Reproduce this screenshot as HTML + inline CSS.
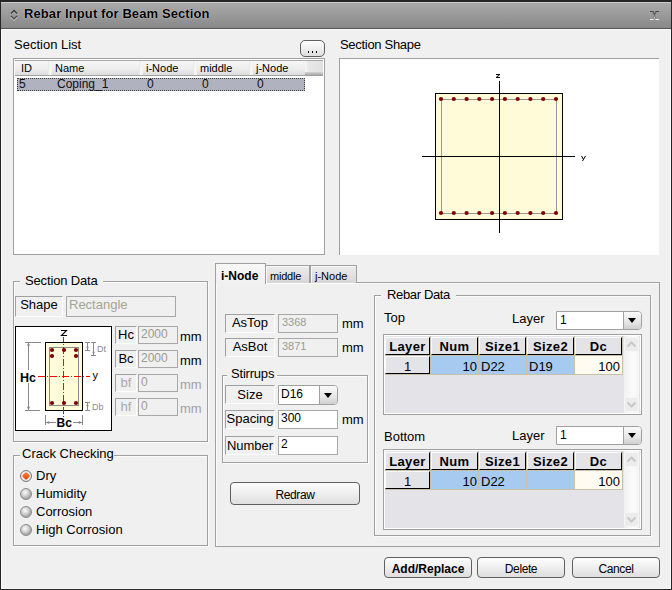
<!DOCTYPE html>
<html><head><meta charset="utf-8">
<style>
*{box-sizing:border-box;margin:0;padding:0}
html,body{width:672px;height:590px;overflow:hidden;background:#f0f0f0}
body{position:relative;font-family:"Liberation Sans",sans-serif;font-size:12px;color:#000}
.a{position:absolute}
.t{position:absolute;white-space:nowrap;line-height:1}
#frame{left:0;top:29px;width:672px;height:561px;border-left:1px solid #262626;border-right:1px solid #262626;border-bottom:1px solid #262626;box-shadow:inset 1px 0 0 #fafafa,inset -1px -1px 0 #fafafa}
#title{left:0;top:0;width:672px;height:30px;background:linear-gradient(#262626 0,#262626 2px,#cacaca 2px,#cacaca 3px,#aaaaaa 3px,#9a9a9a 15px,#888888 28px,#555 28px,#555 29px,#fafafa 29px);border-left:1px solid #262626;border-right:1px solid #262626}
.grp{position:absolute;border:1px solid #a0a0a0;box-shadow:1px 1px 0 #fcfcfc,inset 1px 1px 0 #fcfcfc}
.gt{position:absolute;background:#f0f0f0;padding:0 3px;line-height:1;white-space:nowrap;font-size:13px}
.lbl{position:absolute;border-left:1px solid #a0a0a0;border-top:1px solid #a0a0a0;border-right:1px solid #fff;border-bottom:1px solid #fff;text-align:center;line-height:1;white-space:nowrap}
.inp{position:absolute;border:1px solid #a8a8a8;background:#f0f0f0;color:#9c9c8c;padding-left:2px;white-space:nowrap;line-height:1}
.inpw{background:#fff;color:#000}
.btn{position:absolute;border:1px solid #606060;border-radius:4px;background:linear-gradient(#fdfdfd,#f0f0f0 45%,#dedede);text-align:center;white-space:nowrap}
</style></head><body>
<div id="title" class="a"></div>
<div id="frame" class="a"></div>
<div class="t" style="left:24px;top:7px;font-weight:bold;font-size:13px;letter-spacing:0.1px;text-shadow:0 0 1px #d8d8d8,0 0 1px #d8d8d8">Rebar Input for Beam Section</div>
<svg class="a" style="left:0;top:0" width="30" height="29" viewBox="0 0 30 29">
<path d="M11 13.5 L14 10.5 L17 13.5" fill="none" stroke="#d0d0d0" stroke-width="1" transform="translate(0,1)"/>
<path d="M11 13.5 L14 10.5 L17 13.5" fill="none" stroke="#3a3a3a" stroke-width="1.4"/>
<path d="M11 16 L14 19 L17 16" fill="none" stroke="#e8e8e8" stroke-width="1.2" transform="translate(0,1)"/>
<path d="M11 16 L14 19 L17 16" fill="none" stroke="#4a4a4a" stroke-width="1.4"/>
</svg>
<svg class="a" style="left:640px;top:0" width="30" height="29" viewBox="640 0 30 29">
<path d="M650 11.5 H653 L654.5 14.5 L656 11.5 H659" fill="none" stroke="#4a4a4a" stroke-width="1.2"/>
<path d="M650 19.5 H653 L654.5 16.5 L656 19.5 H659" fill="none" stroke="#f0f0f0" stroke-width="1.2"/>
<path d="M653 12 L656 19 M656 12 L653 19" fill="none" stroke="#707070" stroke-width="1"/>
</svg>

<!-- Section List -->
<div class="t" style="left:14px;top:38px;font-size:13px">Section List</div>
<div class="btn" style="left:300px;top:40px;width:25px;height:17px;border-radius:5px"></div><div class="a" style="left:307.5px;top:51px;width:1px;height:2px;background:#000"></div><div class="a" style="left:311.5px;top:51px;width:1px;height:2px;background:#000"></div><div class="a" style="left:315.5px;top:51px;width:1px;height:2px;background:#000"></div>
<div class="a" style="left:13px;top:58px;width:312px;height:197px;border:1px solid #a0a0a0;background:#fff"></div>
<div class="a" style="left:15px;top:60px;width:308px;height:1px;background:#a8a8a8"></div>
<div class="a" style="left:15px;top:61px;width:308px;height:14px;background:linear-gradient(#f8f8f8,#ececec 60%,#dcdcdc)"></div>
<div class="a" style="left:15px;top:75px;width:308px;height:1px;background:#a0a0a0"></div>
<div class="a" style="left:48px;top:61px;width:4px;height:14px;background:linear-gradient(90deg,#e4e4e4,#f8f8f8,#f0f0f0)"></div>
<div class="a" style="left:139px;top:61px;width:4px;height:14px;background:linear-gradient(90deg,#e4e4e4,#f8f8f8,#f0f0f0)"></div>
<div class="a" style="left:193px;top:61px;width:4px;height:14px;background:linear-gradient(90deg,#e4e4e4,#f8f8f8,#f0f0f0)"></div>
<div class="a" style="left:249px;top:61px;width:4px;height:14px;background:linear-gradient(90deg,#e4e4e4,#f8f8f8,#f0f0f0)"></div>
<div class="a" style="left:305px;top:61px;width:18px;height:14px;background:linear-gradient(90deg,#f8f8f8,#e8e8e8 20%,#e0e0e0)"></div><div class="a" style="left:305px;top:72px;width:18px;height:3px;background:linear-gradient(#d4d4d4,#a8a8a8)"></div>
<div class="t" style="left:21px;top:63px;font-size:11px">ID</div>
<div class="t" style="left:55px;top:63px;font-size:11px">Name</div>
<div class="t" style="left:146px;top:63px;font-size:11px">i-Node</div>
<div class="t" style="left:200px;top:63px;font-size:11px">middle</div>
<div class="t" style="left:256px;top:63px;font-size:11px">j-Node</div>
<div class="a" style="left:17px;top:78px;width:288px;height:13px;background:#b0b2c0;border:1px dotted #404040"></div>
<div class="t" style="left:19px;top:78px;color:#101010">5</div>
<div class="t" style="left:57px;top:78px;color:#101010">Coping_1</div>
<div class="t" style="left:147px;top:78px;color:#101010">0</div>
<div class="t" style="left:202px;top:78px;color:#101010">0</div>
<div class="t" style="left:257px;top:78px;color:#101010">0</div>

<!-- Section Shape -->
<div class="t" style="left:340px;top:38px;font-size:13px;letter-spacing:-0.3px">Section Shape</div>
<div class="a" style="left:339px;top:58px;width:320px;height:197px;border-left:1px solid #a0a0a0;border-top:1px solid #a0a0a0;background:#fff"></div>
<svg class="a" style="left:340px;top:59px" width="319" height="196" viewBox="340 59 319 196">
<rect x="435.5" y="93.5" width="127" height="126" fill="#fffad8" stroke="#000" stroke-width="1"/>
<rect x="441.5" y="99.5" width="115" height="114" fill="none" stroke="#989898" stroke-width="1"/>
<line x1="422" y1="156.5" x2="575" y2="156.5" stroke="#000"/>
<line x1="499.5" y1="81" x2="499.5" y2="233" stroke="#000"/>
<g fill="#800000">
<circle cx="441.0" cy="99.0" r="2.1"/><circle cx="453.8" cy="99.0" r="2.1"/><circle cx="466.6" cy="99.0" r="2.1"/><circle cx="479.3" cy="99.0" r="2.1"/><circle cx="492.1" cy="99.0" r="2.1"/><circle cx="504.9" cy="99.0" r="2.1"/><circle cx="517.7" cy="99.0" r="2.1"/><circle cx="530.4" cy="99.0" r="2.1"/><circle cx="543.2" cy="99.0" r="2.1"/><circle cx="556.0" cy="99.0" r="2.1"/>
<circle cx="441.0" cy="213.0" r="2.1"/><circle cx="453.8" cy="213.0" r="2.1"/><circle cx="466.6" cy="213.0" r="2.1"/><circle cx="479.3" cy="213.0" r="2.1"/><circle cx="492.1" cy="213.0" r="2.1"/><circle cx="504.9" cy="213.0" r="2.1"/><circle cx="517.7" cy="213.0" r="2.1"/><circle cx="530.4" cy="213.0" r="2.1"/><circle cx="543.2" cy="213.0" r="2.1"/><circle cx="556.0" cy="213.0" r="2.1"/>
</g>
<path d="M496 74.5 H500 M499.5 75 L496.5 77 M496 77.5 H500" stroke="#000" stroke-width="1" fill="none"/>
<path d="M581.5 156 L583.5 159.5 M585.5 156 L582.5 161" stroke="#000" stroke-width="1" fill="none"/>
</svg>

<!-- Section Data -->
<div class="grp" style="left:13px;top:281px;width:195px;height:161px"></div>
<div class="a" style="left:20px;top:279px;width:83px;height:5px;background:#f0f0f0"></div><div class="t" style="left:25px;top:274px;font-size:13px;letter-spacing:-0.15px">Section Data</div>
<div class="lbl" style="left:15px;top:296px;width:48px;height:21px;font-size:13px;padding-top:1px">Shape</div>
<div class="inp" style="left:66px;top:296px;width:110px;height:21px;font-size:13px;padding-top:1px;padding-left:2px;color:#a4a494">Rectangle</div>
<div class="a" style="left:15px;top:326px;width:97px;height:105px;border:1px solid #000;background:#fff"></div>
<svg class="a" style="left:16px;top:327px" width="95" height="103" viewBox="16 327 95 103">
<rect x="45.5" y="342.5" width="37" height="68" fill="#fffad8" stroke="#000"/>
<rect x="49.5" y="347.5" width="29" height="58" fill="none" stroke="#8c8c8c"/>
<g stroke="#ff0000" stroke-width="1">
<path d="M63.5 337 V342 M63.5 344 V345 M63.5 347 V354 M63.5 356 V357 M63.5 359 V366 M63.5 368 V369 M63.5 371 V378 M63.5 380 V381 M63.5 383 V390 M63.5 392 V393 M63.5 395 V402 M63.5 404 V405 M63.5 407 V414 M63.5 416 V417"/>
<path d="M38 376.5 H45 M47 376.5 H48 M50 376.5 H57 M59 376.5 H60 M62 376.5 H69 M71 376.5 H72 M74 376.5 H81 M83 376.5 H84 M86 376.5 H90"/>
</g>
<g fill="#800000">
<circle cx="52" cy="350" r="2.1"/><circle cx="64" cy="350" r="2.1"/><circle cx="76" cy="350" r="2.1"/>
<circle cx="52" cy="356" r="2.1"/><circle cx="76" cy="356" r="2.1"/>
<circle cx="52" cy="403" r="2.1"/><circle cx="64" cy="403" r="2.1"/><circle cx="76" cy="403" r="2.1"/>
</g>
<g stroke="#8a8a8a" stroke-width="1" fill="none">
<path d="M25 342.5 H41 M25 410.5 H40 M28.5 343 V370 M28.5 383 V410"/>
<path d="M45.5 415 V425 M46 422.5 H56 M82.5 415 V425 M73 422.5 H82"/>
<path d="M85 342.5 H90 M87.5 343 V350 M85 350.5 H90 M91 342.5 H96 M93.5 343 V355 M91 355.5 H96"/>
<path d="M85 402.5 H90 M87.5 403 V410 M85 410.5 H90"/>
</g>
<g fill="#8a8a8a"><circle cx="28.5" cy="345" r="1.2"/><circle cx="28.5" cy="407.5" r="1.2"/><circle cx="48.5" cy="422.5" r="1.2"/><circle cx="79.5" cy="422.5" r="1.2"/>
<circle cx="87.5" cy="347.5" r="1.1"/><circle cx="93.5" cy="352.5" r="1.1"/><circle cx="87.5" cy="405.5" r="1.1"/></g>
<path d="M61 330.5 H66.5 L61.5 335.5 H67" stroke="#000" stroke-width="1.1" fill="none"/>
<text x="92.5" y="379" font-family="Liberation Sans" font-size="11" fill="#000">y</text>
<text x="20" y="381.5" font-family="Liberation Sans" font-weight="bold" font-size="12.5" fill="#000">Hc</text>
<text x="56.5" y="427" font-family="Liberation Sans" font-weight="bold" font-size="12" fill="#000">Bc</text>
<text x="97" y="352" font-family="Liberation Sans" font-size="9" fill="#8a8a8a">Dt</text>
<text x="92" y="410" font-family="Liberation Sans" font-size="9" fill="#8a8a8a">Db</text>
</svg>
<div class="lbl" style="left:115px;top:326px;width:22px;height:18px;font-size:13px;padding-top:1px">Hc</div>
<div class="inp" style="left:138px;top:326px;width:40px;height:18px;font-size:12px;padding-top:1px">2000</div>
<div class="t" style="left:180px;top:330px;font-size:13px">mm</div>
<div class="lbl" style="left:115px;top:350px;width:22px;height:18px;font-size:13px;padding-top:1px">Bc</div>
<div class="inp" style="left:138px;top:350px;width:40px;height:18px;font-size:12px;padding-top:1px">2000</div>
<div class="t" style="left:180px;top:354px;font-size:13px">mm</div>
<div class="lbl" style="left:115px;top:374px;width:22px;height:18px;font-size:13px;padding-top:1px;color:#a8a8a8">bf</div>
<div class="inp" style="left:138px;top:374px;width:40px;height:18px;font-size:12px;padding-top:1px">0</div>
<div class="t" style="left:180px;top:378px;font-size:13px;color:#a0a0a0">mm</div>
<div class="lbl" style="left:115px;top:398px;width:22px;height:18px;font-size:13px;padding-top:1px;color:#a8a8a8">hf</div>
<div class="inp" style="left:138px;top:398px;width:40px;height:18px;font-size:12px;padding-top:1px">0</div>
<div class="t" style="left:180px;top:402px;font-size:13px;color:#a0a0a0">mm</div>

<!-- Crack Checking -->
<div class="grp" style="left:13px;top:455px;width:195px;height:91px"></div>
<div class="a" style="left:20px;top:452px;width:94px;height:5px;background:#f0f0f0"></div><div class="t" style="left:22px;top:447px;font-size:13px">Crack Checking</div>
<div class="a" style="left:20px;top:470px;width:12px;height:12px;border-radius:50%;border:1px solid #8a8a8a;background:radial-gradient(circle at 50% 50%,#f4f4f4 0,#eef2f2 4px,#d8d8d8 5px);border-color:#7a7a7a"></div>
<div class="a" style="left:23.2px;top:473px;width:6.2px;height:6.2px;transform:rotate(45deg);border-radius:1.2px;background:linear-gradient(135deg,#ff9050,#f05818 60%,#e04010)"></div>
<div class="a" style="left:20px;top:488px;width:12px;height:12px;border-radius:50%;border:1px solid #8a8a8a;background:radial-gradient(circle at 40% 35%,#fafafa 0,#d8d8d8 3px,#a8a8a8 6px)"></div>
<div class="a" style="left:20px;top:506px;width:12px;height:12px;border-radius:50%;border:1px solid #8a8a8a;background:radial-gradient(circle at 40% 35%,#fafafa 0,#d8d8d8 3px,#a8a8a8 6px)"></div>
<div class="a" style="left:20px;top:524px;width:12px;height:12px;border-radius:50%;border:1px solid #8a8a8a;background:radial-gradient(circle at 40% 35%,#fafafa 0,#d8d8d8 3px,#a8a8a8 6px)"></div>
<div class="t" style="left:36px;top:469px;font-size:13px">Dry</div>
<div class="t" style="left:36px;top:487px;font-size:13px">Humidity</div>
<div class="t" style="left:36px;top:505px;font-size:13px">Corrosion</div>
<div class="t" style="left:36px;top:523px;font-size:13px">High Corrosion</div>

<!-- Tab panel -->
<div class="a" style="left:215px;top:282px;width:445px;height:265px;border:1px solid #a0a0a0;box-shadow:inset 1px 1px 0 #fcfcfc"></div>
<!-- tabs -->
<div class="a" style="left:265px;top:265px;width:45px;height:18px;border:1px solid #a0a0a0;border-bottom:none;background:linear-gradient(#ececec,#e2e2e2 50%,#d6d6d6);box-shadow:inset 1px 1px 0 #f8f8f8"></div>
<div class="a" style="left:310px;top:265px;width:47px;height:18px;border:1px solid #a0a0a0;border-bottom:none;background:linear-gradient(#ececec,#e2e2e2 50%,#d6d6d6);box-shadow:inset 1px 1px 0 #f8f8f8"></div>
<div class="a" style="left:215px;top:263px;width:51px;height:21px;border:1px solid #a0a0a0;border-bottom:none;background:linear-gradient(#f8f8f8,#f0f0f0)"></div>
<div class="t" style="left:221px;top:270px;font-weight:bold;font-size:12px">i-Node</div>
<div class="t" style="left:270px;top:271px;font-size:11px;letter-spacing:-0.2px">middle</div>
<div class="t" style="left:315px;top:271px;font-size:11px">j-Node</div>

<div class="lbl" style="left:225px;top:314px;width:50px;height:19px;font-size:13px;padding-top:1px">AsTop</div>
<div class="inp" style="left:278px;top:314px;width:60px;height:19px;font-size:11px;padding-top:2px;padding-left:3px">3368</div>
<div class="t" style="left:342px;top:317px;font-size:13px">mm</div>
<div class="lbl" style="left:225px;top:338px;width:50px;height:19px;font-size:13px;padding-top:1px">AsBot</div>
<div class="inp" style="left:278px;top:338px;width:60px;height:19px;font-size:11px;padding-top:2px;padding-left:3px">3871</div>
<div class="t" style="left:342px;top:341px;font-size:13px">mm</div>

<div class="grp" style="left:222px;top:375px;width:146px;height:88px"></div>
<div class="a" style="left:227px;top:372px;width:50px;height:5px;background:#f0f0f0"></div><div class="t" style="left:231px;top:367px;font-size:13px;letter-spacing:-0.2px">Stirrups</div>
<div class="lbl" style="left:225px;top:385px;width:50px;height:19px;font-size:13px;padding-top:2px">Size</div>
<div class="a" style="left:278px;top:385px;width:60px;height:20px;border:1px solid #a0a0a0;border-radius:0 4px 4px 0;background:#fff"></div>
<div class="t" style="left:281px;top:388px;font-size:12px">D16</div>
<div class="a" style="left:319px;top:386px;width:18px;height:18px;border-left:1px solid #a0a0a0;border-radius:0 3px 3px 0;background:linear-gradient(#fafafa,#e6e6e6 60%,#cfcfcf)"></div>
<div class="a" style="left:323.5px;top:392.5px;width:0;height:0;border-left:4px solid transparent;border-right:4px solid transparent;border-top:5.5px solid #000"></div>
<div class="lbl" style="left:225px;top:410px;width:50px;height:19px;font-size:13px;padding-top:1px">Spacing</div>
<div class="inp inpw" style="left:278px;top:410px;width:60px;height:19px;font-size:12px;padding-top:1px">300</div>
<div class="t" style="left:342px;top:413px;font-size:13px">mm</div>
<div class="lbl" style="left:225px;top:436px;width:50px;height:19px;font-size:13px;padding-top:2px">Number</div>
<div class="inp inpw" style="left:278px;top:436px;width:60px;height:19px;font-size:12px;padding-top:1px">2</div>

<div class="btn" style="left:230px;top:482px;width:130px;height:23px;line-height:25px;font-size:12px;letter-spacing:-0.4px">Redraw</div>

<!-- Rebar Data -->
<div class="grp" style="left:374px;top:295px;width:277px;height:241px"></div>
<div class="a" style="left:381px;top:293px;width:75px;height:5px;background:#f0f0f0"></div><div class="t" style="left:387px;top:288px;font-size:13px;letter-spacing:-0.35px">Rebar Data</div>
<div class="t" style="left:384px;top:311px;font-size:13px">Top</div>
<div class="t" style="left:512px;top:312px;font-size:13px">Layer</div>
<div class="a" style="left:556px;top:311px;width:86px;height:19px;border:1px solid #a0a0a0;border-radius:0 4px 4px 0;background:#fff"></div>
<div class="t" style="left:560px;top:314px;font-size:12px">1</div>
<div class="a" style="left:623px;top:312px;width:18px;height:17px;border-left:1px solid #a0a0a0;border-radius:0 3px 3px 0;background:linear-gradient(#fafafa,#e6e6e6 60%,#cfcfcf)"></div>
<div class="a" style="left:627.5px;top:317.5px;width:0;height:0;border-left:4px solid transparent;border-right:4px solid transparent;border-top:5.5px solid #000"></div>

<div class="t" style="left:384px;top:430px;font-size:13px">Bottom</div>
<div class="t" style="left:512px;top:429px;font-size:13px">Layer</div>
<div class="a" style="left:556px;top:426px;width:86px;height:19px;border:1px solid #a0a0a0;border-radius:0 4px 4px 0;background:#fff"></div>
<div class="t" style="left:560px;top:429px;font-size:12px">1</div>
<div class="a" style="left:623px;top:427px;width:18px;height:17px;border-left:1px solid #a0a0a0;border-radius:0 3px 3px 0;background:linear-gradient(#fafafa,#e6e6e6 60%,#cfcfcf)"></div>
<div class="a" style="left:627.5px;top:432.5px;width:0;height:0;border-left:4px solid transparent;border-right:4px solid transparent;border-top:5.5px solid #000"></div>

<!-- GRIDS -->
<div class="a" style="left:383px;top:334px;width:259px;height:81px;border:1px solid #a0a0a0;background:#e3e3e8;box-shadow:inset 1px 1px 0 #fff,inset -1px -1px 0 #fff"></div>
<div class="a" style="left:385px;top:355px;width:238px;height:1px;background:#c8c0a8"></div>
<div class="a" style="left:385px;top:374px;width:238px;height:1px;background:#c8c0a8"></div>
<div class="a" style="left:430px;top:336px;width:1px;height:39px;background:#c8c0a8"></div>
<div class="a" style="left:385px;top:337px;width:45px;height:18px;background:#e3e3e8;border-top:1px solid #fafafa;border-left:1px solid #fafafa;border-right:1px solid #000;border-bottom:1px solid #000"></div>
<div class="t" style="left:385px;top:340px;width:45px;text-align:center;font-weight:bold;font-size:13px;letter-spacing:0.4px">Layer</div>
<div class="a" style="left:478px;top:336px;width:1px;height:39px;background:#c8c0a8"></div>
<div class="a" style="left:431px;top:337px;width:47px;height:18px;background:#e3e3e8;border-top:1px solid #fafafa;border-left:1px solid #fafafa;border-right:1px solid #000;border-bottom:1px solid #000"></div>
<div class="t" style="left:431px;top:340px;width:47px;text-align:center;font-weight:bold;font-size:13px;letter-spacing:0.4px">Num</div>
<div class="a" style="left:526px;top:336px;width:1px;height:39px;background:#c8c0a8"></div>
<div class="a" style="left:479px;top:337px;width:47px;height:18px;background:#e3e3e8;border-top:1px solid #fafafa;border-left:1px solid #fafafa;border-right:1px solid #000;border-bottom:1px solid #000"></div>
<div class="t" style="left:479px;top:340px;width:47px;text-align:center;font-weight:bold;font-size:13px;letter-spacing:0.4px">Size1</div>
<div class="a" style="left:574px;top:336px;width:1px;height:39px;background:#c8c0a8"></div>
<div class="a" style="left:527px;top:337px;width:47px;height:18px;background:#e3e3e8;border-top:1px solid #fafafa;border-left:1px solid #fafafa;border-right:1px solid #000;border-bottom:1px solid #000"></div>
<div class="t" style="left:527px;top:340px;width:47px;text-align:center;font-weight:bold;font-size:13px;letter-spacing:0.4px">Size2</div>
<div class="a" style="left:622px;top:336px;width:1px;height:39px;background:#c8c0a8"></div>
<div class="a" style="left:575px;top:337px;width:47px;height:18px;background:#e3e3e8;border-top:1px solid #fafafa;border-left:1px solid #fafafa;border-right:1px solid #000;border-bottom:1px solid #000"></div>
<div class="t" style="left:575px;top:340px;width:47px;text-align:center;font-weight:bold;font-size:13px;letter-spacing:0.4px">Dc</div>
<div class="a" style="left:385px;top:356px;width:45px;height:18px;background:#e3e3e8;border-top:1px solid #fafafa;border-left:1px solid #fafafa;border-right:1px solid #000;border-bottom:1px solid #000"></div>
<div class="t" style="left:385px;top:360px;width:45px;text-align:center;font-size:13px">1</div>
<div class="a" style="left:431px;top:356px;width:47px;height:18px;background:#a6caf0"></div>
<div class="t" style="left:431px;top:360px;width:46px;text-align:right;font-size:13px">10</div>
<div class="a" style="left:479px;top:356px;width:47px;height:18px;background:#a6caf0"></div>
<div class="t" style="left:481px;top:360px;font-size:13px">D22</div>
<div class="a" style="left:527px;top:356px;width:47px;height:18px;background:#a6caf0"></div>
<div class="t" style="left:529px;top:360px;font-size:13px">D19</div>
<div class="a" style="left:575px;top:356px;width:47px;height:18px;background:#fffbf0"></div>
<div class="t" style="left:575px;top:360px;width:45px;text-align:right;font-size:13px">100</div>
<div class="a" style="left:624px;top:336px;width:15px;height:77px;background:linear-gradient(90deg,#f0f0f0,#fbfbfb 60%,#f4f4f4)"></div>
<div class="a" style="left:624px;top:337px;width:15px;height:15px;background:#ececec;border:1px solid #f6f6f6;border-radius:2px"></div>
<svg class="a" style="left:624px;top:337px" width="15" height="15"><path d="M3.5 9.5 L7.5 5.5 L11.5 9.5" fill="none" stroke="#c8c8c8" stroke-width="2"/></svg>
<div class="a" style="left:624px;top:397px;width:15px;height:15px;background:#ececec;border:1px solid #f6f6f6;border-radius:2px"></div>
<svg class="a" style="left:624px;top:397px" width="15" height="15"><path d="M3.5 5.5 L7.5 9.5 L11.5 5.5" fill="none" stroke="#c8c8c8" stroke-width="2"/></svg>
<div class="a" style="left:383px;top:449px;width:259px;height:81px;border:1px solid #a0a0a0;background:#e3e3e8;box-shadow:inset 1px 1px 0 #fff,inset -1px -1px 0 #fff"></div>
<div class="a" style="left:385px;top:470px;width:238px;height:1px;background:#c8c0a8"></div>
<div class="a" style="left:385px;top:489px;width:238px;height:1px;background:#c8c0a8"></div>
<div class="a" style="left:430px;top:451px;width:1px;height:39px;background:#c8c0a8"></div>
<div class="a" style="left:385px;top:452px;width:45px;height:18px;background:#e3e3e8;border-top:1px solid #fafafa;border-left:1px solid #fafafa;border-right:1px solid #000;border-bottom:1px solid #000"></div>
<div class="t" style="left:385px;top:455px;width:45px;text-align:center;font-weight:bold;font-size:13px;letter-spacing:0.4px">Layer</div>
<div class="a" style="left:478px;top:451px;width:1px;height:39px;background:#c8c0a8"></div>
<div class="a" style="left:431px;top:452px;width:47px;height:18px;background:#e3e3e8;border-top:1px solid #fafafa;border-left:1px solid #fafafa;border-right:1px solid #000;border-bottom:1px solid #000"></div>
<div class="t" style="left:431px;top:455px;width:47px;text-align:center;font-weight:bold;font-size:13px;letter-spacing:0.4px">Num</div>
<div class="a" style="left:526px;top:451px;width:1px;height:39px;background:#c8c0a8"></div>
<div class="a" style="left:479px;top:452px;width:47px;height:18px;background:#e3e3e8;border-top:1px solid #fafafa;border-left:1px solid #fafafa;border-right:1px solid #000;border-bottom:1px solid #000"></div>
<div class="t" style="left:479px;top:455px;width:47px;text-align:center;font-weight:bold;font-size:13px;letter-spacing:0.4px">Size1</div>
<div class="a" style="left:574px;top:451px;width:1px;height:39px;background:#c8c0a8"></div>
<div class="a" style="left:527px;top:452px;width:47px;height:18px;background:#e3e3e8;border-top:1px solid #fafafa;border-left:1px solid #fafafa;border-right:1px solid #000;border-bottom:1px solid #000"></div>
<div class="t" style="left:527px;top:455px;width:47px;text-align:center;font-weight:bold;font-size:13px;letter-spacing:0.4px">Size2</div>
<div class="a" style="left:622px;top:451px;width:1px;height:39px;background:#c8c0a8"></div>
<div class="a" style="left:575px;top:452px;width:47px;height:18px;background:#e3e3e8;border-top:1px solid #fafafa;border-left:1px solid #fafafa;border-right:1px solid #000;border-bottom:1px solid #000"></div>
<div class="t" style="left:575px;top:455px;width:47px;text-align:center;font-weight:bold;font-size:13px;letter-spacing:0.4px">Dc</div>
<div class="a" style="left:385px;top:471px;width:45px;height:18px;background:#e3e3e8;border-top:1px solid #fafafa;border-left:1px solid #fafafa;border-right:1px solid #000;border-bottom:1px solid #000"></div>
<div class="t" style="left:385px;top:475px;width:45px;text-align:center;font-size:13px">1</div>
<div class="a" style="left:431px;top:471px;width:47px;height:18px;background:#a6caf0"></div>
<div class="t" style="left:431px;top:475px;width:46px;text-align:right;font-size:13px">10</div>
<div class="a" style="left:479px;top:471px;width:47px;height:18px;background:#a6caf0"></div>
<div class="t" style="left:481px;top:475px;font-size:13px">D22</div>
<div class="a" style="left:527px;top:471px;width:47px;height:18px;background:#a6caf0"></div>
<div class="a" style="left:575px;top:471px;width:47px;height:18px;background:#fffbf0"></div>
<div class="t" style="left:575px;top:475px;width:45px;text-align:right;font-size:13px">100</div>
<div class="a" style="left:624px;top:451px;width:15px;height:77px;background:linear-gradient(90deg,#f0f0f0,#fbfbfb 60%,#f4f4f4)"></div>
<div class="a" style="left:624px;top:452px;width:15px;height:15px;background:#ececec;border:1px solid #f6f6f6;border-radius:2px"></div>
<svg class="a" style="left:624px;top:452px" width="15" height="15"><path d="M3.5 9.5 L7.5 5.5 L11.5 9.5" fill="none" stroke="#c8c8c8" stroke-width="2"/></svg>
<div class="a" style="left:624px;top:512px;width:15px;height:15px;background:#ececec;border:1px solid #f6f6f6;border-radius:2px"></div>
<svg class="a" style="left:624px;top:512px" width="15" height="15"><path d="M3.5 5.5 L7.5 9.5 L11.5 5.5" fill="none" stroke="#c8c8c8" stroke-width="2"/></svg>
<!-- /GRIDS -->
<!-- Bottom buttons -->
<div class="btn" style="left:384px;top:557px;width:88px;height:21px;font-weight:bold;line-height:23px">Add/Replace</div>
<div class="btn" style="left:477px;top:557px;width:88px;height:21px;line-height:22px;letter-spacing:-0.4px">Delete</div>
<div class="btn" style="left:572px;top:557px;width:88px;height:21px;line-height:22px;letter-spacing:-0.4px">Cancel</div>
</body></html>
